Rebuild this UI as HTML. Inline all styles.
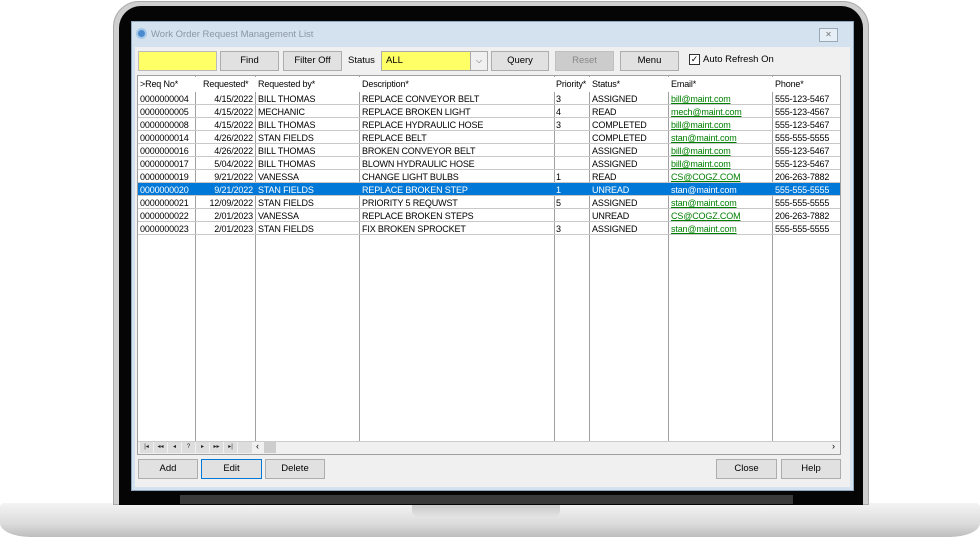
<!DOCTYPE html>
<html><head><style>
*{margin:0;padding:0;box-sizing:border-box}
body{width:980px;height:537px;background:#fff;position:relative;overflow:hidden;font-family:"Liberation Sans",sans-serif;font-size:9px;color:#000}
.abs{position:absolute}
.btn{position:absolute;height:20px;background:#e1e1e1;border:1px solid #adadad;text-align:center;line-height:18px;font-size:9.5px}
.grid{position:absolute;left:137px;top:75px;width:704px;height:380px;background:#fff;border:1px solid #a0a0a0}
.vl{position:absolute;top:0;width:1px;height:366px;background:#a0a0a0}
.row{position:absolute;left:0;width:702px;height:13px;border-bottom:1px solid #c8c8c8}
.c{position:absolute;top:1px;line-height:12px;white-space:nowrap;font-size:9px;letter-spacing:-0.15px}
a{color:#008000;text-decoration:underline}
.nb{display:inline-block;width:13px;height:11px;background:#ddd;text-align:center;margin-right:1px}
</style></head><body>
<div class="abs" style="left:0;top:503px;width:980px;height:34px;background:linear-gradient(#f4f4f4,#dcdcdc 60%,#bdbdbd);border-radius:4px 4px 30px 30px/4px 4px 14px 14px"></div>
<div class="abs" style="left:412px;top:503px;width:148px;height:15px;background:linear-gradient(#c8c8c8,#e4e4e4);border-radius:0 0 8px 8px"></div>
<div class="abs" style="left:113px;top:1px;width:756px;height:504px;background:#cfcfcf;border-radius:26px 26px 0 0;border:1px solid #aaa"></div>
<div class="abs" style="left:119px;top:6px;width:744px;height:499px;background:#050505;border-radius:22px 22px 0 0"></div>
<div class="abs" style="left:180px;top:495px;width:613px;height:9px;background:#3a3a3a"></div>
<div class="abs" style="left:131px;top:21px;width:723px;height:470px;background:#d4e1ee;border:1px solid #8fa8c0"></div>
<div class="abs" style="left:136px;top:28px;width:11px;height:11px;border-radius:50%;background:#4a8bd0;border:2px solid #a9c9ea"></div>
<div class="abs" style="left:151px;top:29px;color:#8a97a4;font-size:9.5px">Work Order Request Management List</div>
<div class="abs" style="left:819px;top:28px;width:19px;height:14px;border:1px solid #9aa9b8;background:#e6eef6;color:#777;font-size:8px;text-align:center;line-height:12px">✕</div>
<div class="abs" style="left:135px;top:47px;width:715px;height:440px;background:#f0f0f0"></div>
<div class="abs" style="left:138px;top:51px;width:79px;height:20px;background:#ffff66;border:1px solid #bbb"></div>
<div class="btn" style="left:220px;top:51px;width:59px">Find</div>
<div class="btn" style="left:283px;top:51px;width:59px">Filter Off</div>
<div class="abs" style="left:348px;top:55px;font-size:9.5px">Status</div>
<div class="abs" style="left:381px;top:51px;width:107px;height:20px;background:#ffff66;border:1px solid #aaa;padding-left:4px;line-height:18px;font-size:9.5px">ALL</div>
<div class="abs" style="left:470px;top:52px;width:17px;height:18px;background:#f0f0f0;border-left:1px solid #aaa;text-align:center;line-height:18px;font-size:8px;color:#555">⌵</div>
<div class="btn" style="left:491px;top:51px;width:58px">Query</div>
<div class="btn" style="left:555px;top:51px;width:59px;background:#cccccc;color:#888;border-color:#c0c0c0">Reset</div>
<div class="btn" style="left:620px;top:51px;width:59px">Menu</div>
<div class="abs" style="left:689px;top:54px;width:11px;height:11px;border:1px solid #333;background:#fff;font-size:9px;line-height:9px;text-align:center">✓</div>
<div class="abs" style="left:703px;top:54px;font-size:9.5px">Auto Refresh On</div>
<div class="grid">
<div class="vl" style="left:57px"></div><div class="vl" style="left:117px"></div><div class="vl" style="left:221px"></div><div class="vl" style="left:416px"></div><div class="vl" style="left:451px"></div><div class="vl" style="left:530px"></div><div class="vl" style="left:634px"></div>
<div class="row" style="top:1px;height:15px;background:#fff;border-bottom:none">
<span class="c" style="left:2px">&gt;Req No*</span><span class="c" style="left:65px">Requested*</span><span class="c" style="left:120px">Requested by*</span><span class="c" style="left:224px">Description*</span><span class="c" style="left:418px">Priority*</span><span class="c" style="left:454px">Status*</span><span class="c" style="left:533px">Email*</span><span class="c" style="left:637px">Phone*</span></div>
<div id="rows"></div>
<div class="abs" style="left:0;top:365px;width:702px;height:13px;background:#f0f0f0;border-top:1px solid #ccc"></div>
<div class="abs" style="left:2px;top:366px;width:110px;height:11px;font-size:6px;color:#222;line-height:11px;white-space:nowrap">
<span class="nb">|◂</span><span class="nb">◂◂</span><span class="nb">◂</span><span class="nb">?</span><span class="nb">▸</span><span class="nb">▸▸</span><span class="nb">▸|</span></div>
<div class="abs" style="left:100px;top:366px;width:14px;height:11px;background:#ddd"></div>
<div class="abs" style="left:118px;top:365px;font-size:9px">‹</div>
<div class="abs" style="left:126px;top:366px;width:12px;height:11px;background:#cdcdcd"></div>
<div class="abs" style="left:694px;top:365px;font-size:9px">›</div>
</div>
<div class="btn" style="left:138px;top:459px;width:60px">Add</div>
<div class="btn" style="left:201px;top:459px;width:61px;border:1px solid #0078d7">Edit</div>
<div class="btn" style="left:265px;top:459px;width:60px">Delete</div>
<div class="btn" style="left:716px;top:459px;width:61px">Close</div>
<div class="btn" style="left:781px;top:459px;width:60px">Help</div>
<script>
var d=[["0000000004","4/15/2022","BILL THOMAS","REPLACE CONVEYOR BELT","3","ASSIGNED","bill@maint.com","555-123-5467"],
["0000000005","4/15/2022","MECHANIC","REPLACE BROKEN LIGHT","4","READ","mech@maint.com","555-123-4567"],
["0000000008","4/15/2022","BILL THOMAS","REPLACE HYDRAULIC HOSE","3","COMPLETED","bill@maint.com","555-123-5467"],
["0000000014","4/26/2022","STAN FIELDS","REPLACE BELT","","COMPLETED","stan@maint.com","555-555-5555"],
["0000000016","4/26/2022","BILL THOMAS","BROKEN CONVEYOR BELT","","ASSIGNED","bill@maint.com","555-123-5467"],
["0000000017","5/04/2022","BILL THOMAS","BLOWN HYDRAULIC HOSE","","ASSIGNED","bill@maint.com","555-123-5467"],
["0000000019","9/21/2022","VANESSA","CHANGE LIGHT BULBS","1","READ","CS@COGZ.COM","206-263-7882"],
["0000000020","9/21/2022","STAN FIELDS","REPLACE BROKEN STEP","1","UNREAD","stan@maint.com","555-555-5555"],
["0000000021","12/09/2022","STAN FIELDS","PRIORITY 5 REQUWST","5","ASSIGNED","stan@maint.com","555-555-5555"],
["0000000022","2/01/2023","VANESSA","REPLACE BROKEN STEPS","","UNREAD","CS@COGZ.COM","206-263-7882"],
["0000000023","2/01/2023","STAN FIELDS","FIX BROKEN SPROCKET","3","ASSIGNED","stan@maint.com","555-555-5555"]];
var h="";d.forEach(function(r,i){var sel=i==7;var st=sel?"background:#0078d7;color:#fff;":"";
h+='<div class="row" style="top:'+(16+i*13)+'px;'+st+'"><span class="c" style="left:2px">'+r[0]+'</span><span class="c" style="right:'+(702-115)+'px">'+r[1]+'</span><span class="c" style="left:120px">'+r[2]+'</span><span class="c" style="left:224px">'+r[3]+'</span><span class="c" style="left:418px">'+r[4]+'</span><span class="c" style="left:454px">'+r[5]+'</span><span class="c" style="left:533px">'+(sel?'<span style="color:#fff">'+r[6]+'</span>':'<a>'+r[6]+'</a>')+'</span><span class="c" style="left:637px">'+r[7]+'</span></div>';});
document.getElementById("rows").innerHTML=h;
</script>
</body></html>
